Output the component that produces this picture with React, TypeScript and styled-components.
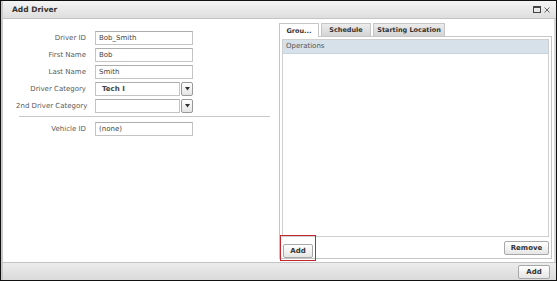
import React from "react";
import styled, { createGlobalStyle } from "styled-components";

const Global = createGlobalStyle`
  html, body { margin: 0; padding: 0; background: #fff; }
  body { font-family: "DejaVu Sans", Verdana, sans-serif; }
`;

const Window = styled.div`
  width: 557px;
  height: 281px;
  box-sizing: border-box;
  border: 1px solid #111;
  display: flex;
  flex-direction: column;
  background: #fff;
  overflow: hidden;
`;

const TitleBar = styled.div`
  height: 17px;
  flex: none;
  display: flex;
  align-items: center;
  justify-content: space-between;
  padding: 0 6px 0 9px;
  background: linear-gradient(#f4f4f4, #dedede);
  border-bottom: 1px solid #c4c4c4;
  border-left: 2px solid #c9c9c9;
`;

const Title = styled.span`
  font-size: 7.5px;
  font-weight: bold;
  color: #333;
`;

const WinIcons = styled.div`
  display: flex;
  gap: 3px;
  align-items: center;
  color: #555;
`;

const Body = styled.div`
  flex: 1;
  display: flex;
  border-left: 2px solid #c9c9c9;
  border-right: 2px solid #d8d8d8;
  min-height: 0;
`;

const FormCol = styled.div`
  width: 263px;
  flex: none;
  padding: 12px 0 0 13px;
  display: flex;
  flex-direction: column;
  gap: 3px;
`;

const Row = styled.div`
  display: grid;
  grid-template-columns: 70px 98px;
  column-gap: 9px;
  align-items: center;
  height: 14px;
`;

const Label = styled.label`
  font-size: 7px;
  color: #5a5a5a;
  text-align: right;
  white-space: nowrap;
`;

const Field = styled.div<{ $bold?: boolean }>`
  height: 14px;
  box-sizing: border-box;
  border: 1px solid #c4c4c4;
  border-top-color: #adadad;
  background: #fff;
  font-size: 7px;
  line-height: 12px;
  padding-left: 3px;
  color: #444;
  font-weight: ${(p) => (p.$bold ? "bold" : "normal")};
`;

const SelectWrap = styled.div`
  display: flex;
  gap: 1px;
  height: 14px;
`;

const SelectBox = styled(Field)`
  flex: 1;
  padding-left: 6px;
`;

const Arrow = styled.div`
  width: 12px;
  height: 14px;
  box-sizing: border-box;
  border: 1px solid #999;
  border-radius: 2px;
  background: linear-gradient(#fff, #e4e4e4);
  display: flex;
  align-items: center;
  justify-content: center;
`;

const Divider = styled.hr`
  margin: 0 0 2px 3px;
  width: 251px;
  border: none;
  border-top: 1px solid #c8c8c8;
`;

const RightCol = styled.div`
  flex: 1;
  padding: 3px 2px 3px 0;
  display: flex;
  flex-direction: column;
`;

const Tabs = styled.div`
  display: flex;
  gap: 2px;
  height: 14px;
  flex: none;
  align-items: flex-end;
`;

const Tab = styled.div<{ $active?: boolean; $w: number }>`
  width: ${(p) => p.$w}px;
  height: ${(p) => (p.$active ? 14 : 13)}px;
  box-sizing: border-box;
  font-size: 6.5px;
  font-weight: bold;
  white-space: nowrap;
  color: #333;
  display: flex;
  align-items: center;
  justify-content: center;
  border: 1px solid #c6c6c6;
  border-bottom: none;
  background: ${(p) => (p.$active ? "#fff" : "linear-gradient(#ececec, #d4d4d4)")};
  margin-bottom: ${(p) => (p.$active ? "-1px" : "0")};
  position: relative;
`;

const Panel = styled.div`
  flex: 1;
  border: 1px solid #c6c6c6;
  padding: 2px 2px 1px 2px;
  display: flex;
  flex-direction: column;
  gap: 2px;
`;

const List = styled.div`
  flex: 1;
  border: 1px solid #cfcfcf;
  background: #fff;
`;

const ListHeader = styled.div`
  height: 13px;
  background: #d7e1ea;
  border-bottom: 1px solid #c8d2dc;
  font-size: 7px;
  color: #555;
  line-height: 13px;
  padding-left: 3px;
`;

const ButtonRow = styled.div`
  display: flex;
  justify-content: space-between;
  align-items: center;
  height: 18px;
  flex: none;
`;

const Highlight = styled.div`
  border: 1px solid #c8262e;
  padding: 2px;
  margin-left: -2px;
`;

const Button = styled.button<{ $w: number }>`
  width: ${(p) => p.$w}px;
  height: 14px;
  padding: 0;
  border: 1px solid #a8a8a8;
  border-radius: 2px;
  background: linear-gradient(#ffffff, #e6e6e6);
  font-family: "DejaVu Sans", Verdana, sans-serif;
  font-size: 7px;
  font-weight: bold;
  color: #333;
`;

const Footer = styled.div`
  height: 17px;
  flex: none;
  border-top: 1px solid #c4c4c4;
  background: linear-gradient(#ececec, #dadada);
  border-left: 2px solid #c9c9c9;
  display: flex;
  justify-content: flex-end;
  align-items: center;
  padding-right: 6px;
`;

const fields = [
  { label: "Driver ID", value: "Bob_Smith" },
  { label: "First Name", value: "Bob" },
  { label: "Last Name", value: "Smith" },
];

const ArrowIcon = () => (
  <svg width="5" height="4" viewBox="0 0 5 4">
    <path d="M0 0h5L2.5 3.5z" fill="#333" />
  </svg>
);

export default function App() {
  return (
    <>
      <Global />
      <Window>
        <TitleBar>
          <Title>Add Driver</Title>
          <WinIcons>
            <svg width="8" height="7" viewBox="0 0 8 7">
              <rect x="0.5" y="0.5" width="7" height="6" fill="none" stroke="#444" />
              <rect x="0.5" y="0.5" width="7" height="1.5" fill="#444" />
            </svg>
            <svg width="6" height="6" viewBox="0 0 6 6">
              <path d="M0.5 0.5L5.5 5.5M5.5 0.5L0.5 5.5" stroke="#666" strokeWidth="1" />
            </svg>
          </WinIcons>
        </TitleBar>
        <Body>
          <FormCol>
            {fields.map((f) => (
              <Row key={f.label}>
                <Label>{f.label}</Label>
                <Field>{f.value}</Field>
              </Row>
            ))}
            <Row>
              <Label>Driver Category</Label>
              <SelectWrap>
                <SelectBox $bold>Tech I</SelectBox>
                <Arrow>
                  <ArrowIcon />
                </Arrow>
              </SelectWrap>
            </Row>
            <Row>
              <Label>2nd Driver Category</Label>
              <SelectWrap>
                <SelectBox />
                <Arrow>
                  <ArrowIcon />
                </Arrow>
              </SelectWrap>
            </Row>
            <Divider />
            <Row>
              <Label>Vehicle ID</Label>
              <Field>(none)</Field>
            </Row>
          </FormCol>
          <RightCol>
            <Tabs>
              <Tab $active $w={40}>Grou...</Tab>
              <Tab $w={50}>Schedule</Tab>
              <Tab $w={72}>Starting Location</Tab>
            </Tabs>
            <Panel>
              <List>
                <ListHeader>Operations</ListHeader>
              </List>
              <ButtonRow>
                <Highlight>
                  <Button $w={30}>Add</Button>
                </Highlight>
                <Button $w={45}>Remove</Button>
              </ButtonRow>
            </Panel>
          </RightCol>
        </Body>
        <Footer>
          <Button $w={32}>Add</Button>
        </Footer>
      </Window>
    </>
  );
}
